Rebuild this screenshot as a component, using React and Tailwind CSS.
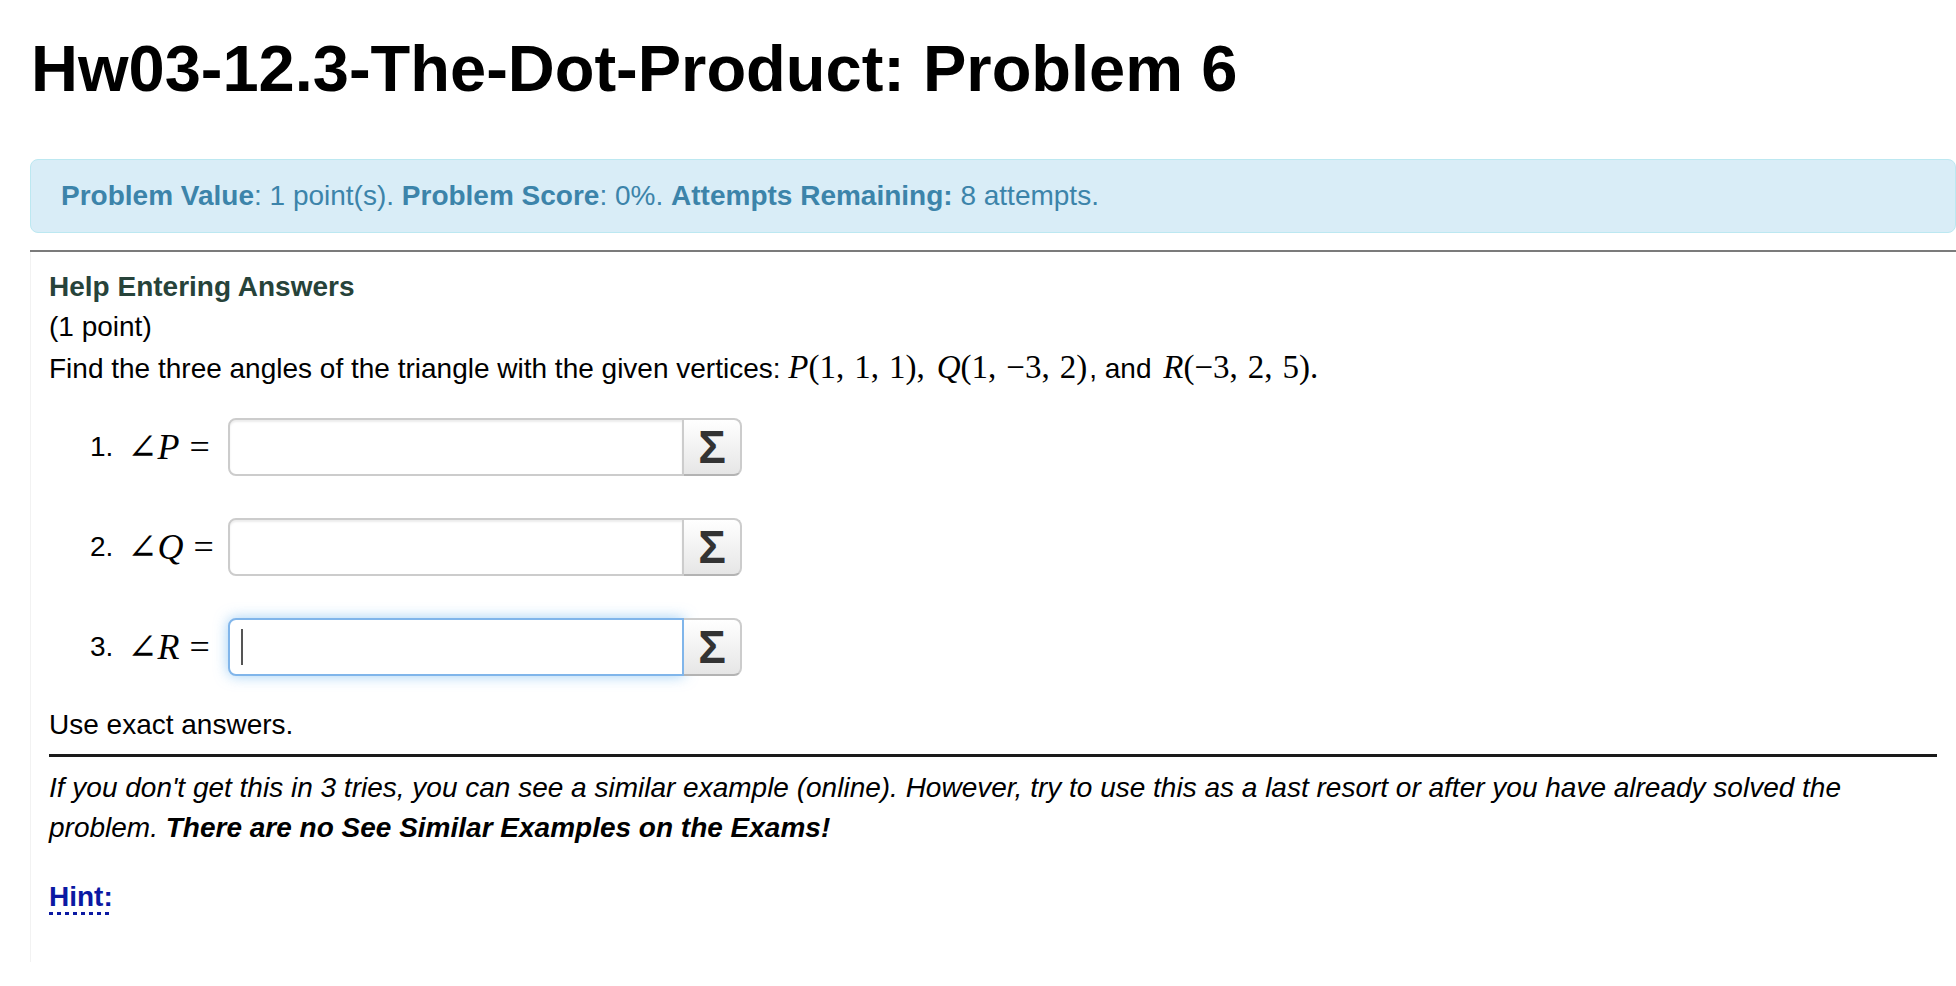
import React from "react";

const answers = [
  { n: "1.", v: "P", focused: false },
  { n: "2.", v: "Q", focused: false },
  { n: "3.", v: "R", focused: true },
];

// MathJax-style spacing after commas
const Sep = ({ wide }) => <span className={wide ? "mr-[12px]" : "mr-[10px]"}>,</span>;

function AnswerRow({ item }) {
  return (
    <div className="flex h-[58px] items-center">
      <div className="flex w-[179px] items-center pl-[41px]">
        <span>{item.n}</span>
        <span className="ml-[14px] font-['Liberation_Serif','DejaVu_Serif',serif] text-[36px]">
          ∠<i>{item.v}</i>
          <span className="ml-[10px]">=</span>
        </span>
      </div>
      <div
        className={`flex h-[58px] w-[456px] items-center rounded-l-[8px] border-2 bg-white pl-[11px] ${
          item.focused
            ? "border-[#80b5ea] shadow-[0_0_14px_rgba(82,168,236,0.55)]"
            : "border-[#cccccc] shadow-[inset_0_2px_2px_rgba(0,0,0,0.075)]"
        }`}
      >
        {item.focused && <span className="h-[36px] w-[2px] bg-[#555]" />}
      </div>
      <div className="flex h-[58px] w-[58px] items-center justify-center rounded-r-[8px] border-2 border-l-0 border-[#cccccc] border-b-[#b3b3b3] bg-linear-to-b from-white to-[#e6e6e6] text-[46px] font-bold leading-none text-[#333]">
        Σ
      </div>
    </div>
  );
}

export default function App() {
  return (
    <div className="min-h-screen bg-white font-['Liberation_Sans',Arial,sans-serif] text-[28px] leading-[40px] text-black">
      <h1 className="pl-[31px] pt-[36px] text-[65px] font-bold leading-none">
        Hw03-12.3-The-Dot-Product: Problem 6
      </h1>
      <div className="ml-[30px]">
        <div className="mt-[58px] rounded-[8px] border border-[#bce8f1] bg-[#d9edf7] py-[16px] pl-[30px] text-[#3c84aa]">
          <b>Problem Value</b>: 1 point(s). <b>Problem Score</b>: 0%.{" "}
          <b>Attempts Remaining:</b> 8 attempts.
        </div>
        <div className="mt-[17px] h-[2px] bg-[#7b7b7b]" />
        <div className="border-l border-[#f2f2f2] pb-[45px] pl-[18px] pr-[19px] pt-[15px]">
          <div className="font-bold text-[#27433a]">Help Entering Answers</div>
          <div>(1 point)</div>
          <div>
            Find the three angles of the triangle with the given vertices:{" "}
            <span className="font-['Liberation_Serif',serif] text-[33px] leading-[40px]">
              <i>P</i>(1<Sep />1<Sep />1)<Sep wide />
              <i>Q</i>(1<Sep />−3<Sep />2)
            </span>
            <span className="ml-[2px]">, and</span>{" "}
            <span className="ml-[4px] font-['Liberation_Serif',serif] text-[33px] leading-[40px]">
              <i>R</i>(−3<Sep />2<Sep />5).
            </span>
          </div>
          <div className="mt-[29px] flex flex-col gap-[42px]">
            {answers.map((a) => (
              <AnswerRow key={a.n} item={a} />
            ))}
          </div>
          <div className="mt-[29px]">Use exact answers.</div>
          <div className="mt-[9px] h-[3px] bg-[#1a1a1a]" />
          <p className="mt-[11px] italic">
            If you don't get this in 3 tries, you can see a similar example (online). However, try to use this as a last resort or after you have already solved the
            <br />
            problem. <b>There are no See Similar Examples on the Exams!</b>
          </p>
          <div className="mt-[29px]">
            <a className="relative inline-block font-bold text-[#0b19a3]">
              Hint:
              <span className="absolute left-0 right-0 top-[35px] h-[3px] bg-[repeating-linear-gradient(90deg,#0b19a3_0px,#0b19a3_4px,transparent_4px,transparent_8px)]" />
            </a>
          </div>
        </div>
      </div>
    </div>
  );
}
